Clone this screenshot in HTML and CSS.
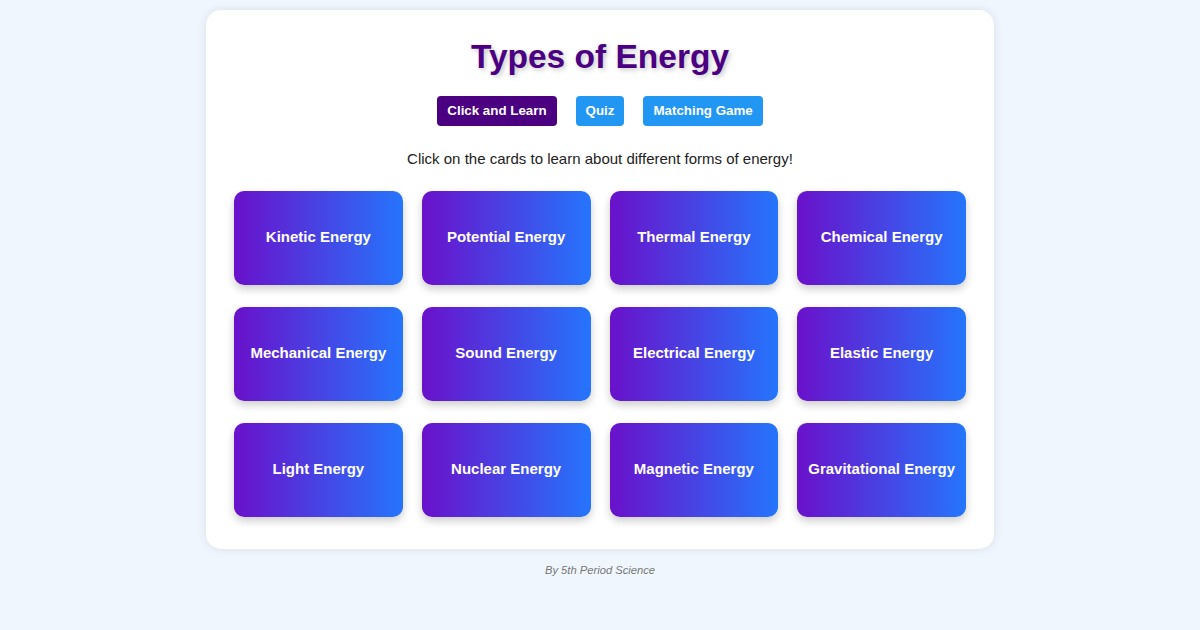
FILE: index.html
```html
<!DOCTYPE html>
<html lang="en">
<head>
<meta charset="utf-8">
<title>Types of Energy</title>
<link rel="stylesheet" href="styles.css">
</head>
<body>
  <main class="container">
    <h1 class="title">Types of Energy</h1>
    <nav class="tabs">
      <button class="tab tab-active">Click and Learn</button>
      <button class="tab">Quiz</button>
      <button class="tab">Matching Game</button>
    </nav>
    <p class="intro">Click on the cards to learn about different forms of energy!</p>
    <section class="cards">
      <div class="card">Kinetic Energy</div>
      <div class="card">Potential Energy</div>
      <div class="card">Thermal Energy</div>
      <div class="card">Chemical Energy</div>
      <div class="card">Mechanical Energy</div>
      <div class="card">Sound Energy</div>
      <div class="card">Electrical Energy</div>
      <div class="card">Elastic Energy</div>
      <div class="card">Light Energy</div>
      <div class="card">Nuclear Energy</div>
      <div class="card">Magnetic Energy</div>
      <div class="card">Gravitational Energy</div>
    </section>
  </main>
  <footer class="footer">By 5th Period Science</footer>
</body>
</html>
```

FILE: styles.css
```css
html, body {
  margin: 0;
  padding: 0;
}
body {
  background: #f0f6fd;
  font-family: "Liberation Sans", Arial, sans-serif;
  color: #333;
  padding-top: 10px;
}
.container {
  width: 788px;
  box-sizing: border-box;
  margin: 0 auto;
  background: #fff;
  border-radius: 15px;
  box-shadow: 0 0 10px rgba(0, 0, 0, 0.1);
  padding: 20px 28px 32px;
}
.title {
  margin: 8px 0 0;
  text-align: center;
  font-size: 33.5px;
  font-weight: bold;
  color: #4b0082;
  text-shadow: 2px 2px 5px rgba(0, 0, 0, 0.22);
}
.tabs {
  display: flex;
  justify-content: center;
  gap: 19px;
  margin-top: 20px;
}
.tab {
  font-family: "Liberation Sans", Arial, sans-serif;
  font-size: 13.33px;
  font-weight: bold;
  color: #fff;
  background: #2196f3;
  border: none;
  border-radius: 4px;
  padding: 0 10px;
  height: 30px;
  line-height: 30px;
}
.tab-active {
  background: #4b0082;
}
.intro {
  margin: 24px 0 0;
  text-align: center;
  font-size: 15px;
  color: #222;
}
.cards {
  display: grid;
  grid-template-columns: repeat(4, 1fr);
  column-gap: 19px;
  row-gap: 22px;
  margin-top: 24px;
}
.card {
  height: 94px;
  box-sizing: border-box;
  padding-bottom: 4px;
  display: flex;
  align-items: center;
  justify-content: center;
  text-align: center;
  border-radius: 10px;
  background: linear-gradient(to right, #6a11cb, #2575fc);
  color: #fff;
  font-size: 15px;
  font-weight: bold;
  box-shadow: 0 4px 8px rgba(0, 0, 0, 0.2);
}
.footer {
  margin-top: 15px;
  text-align: center;
  font-size: 11.2px;
  font-style: italic;
  color: #777;
}
```
